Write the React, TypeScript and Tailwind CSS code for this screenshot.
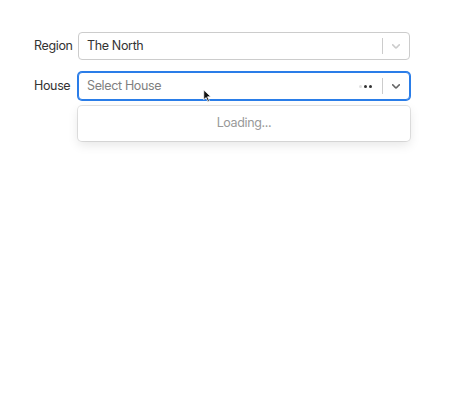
import React from 'react';

function Chevron({ dark }: { dark?: boolean }) {
  return (
    <svg viewBox="0 0 20 20" className={`w-[14px] h-[14px] ${dark ? 'fill-[#666666]' : 'fill-[#cccccc]'}`}>
      <path d="M4.516 7.548c0.436-0.446 1.043-0.481 1.576 0l3.908 3.747 3.908-3.747c0.533-0.481 1.141-0.446 1.574 0 0.436 0.445 0.408 1.197 0 1.615-0.406 0.418-4.695 4.502-4.695 4.502-0.217 0.223-0.502 0.335-0.787 0.335s-0.57-0.112-0.789-0.335c0 0-4.287-4.084-4.695-4.502s-0.436-1.17 0-1.615z" />
    </svg>
  );
}

export default function App() {
  return (
    <div className="w-[474px] h-[406px] bg-white pt-[32px] pl-[34px] text-[12.5px] tracking-[-0.35px] text-[#333333]" style={{ fontFamily: 'Inter, "Noto Sans", sans-serif' }}>
      <div className="flex flex-col gap-[12px] w-[376px]">
        {/* Region */}
        <div className="flex items-center">
          <span className="w-[44px] shrink-0 pt-[1px]">Region</span>
          <div className="flex-1 h-[28px] flex items-center border border-[#cccccc] rounded-[4px] bg-white">
            <div className="flex-1 pl-[8px] pt-[1px]">The North</div>
            <span className="w-px h-[16px] bg-[#cccccc]" />
            <div className="px-[6px] flex items-center">
              <Chevron />
            </div>
          </div>
        </div>

        {/* House */}
        <div className="flex items-center">
          <span className="w-[44px] shrink-0 pt-[1px]">House</span>
          <div className="relative flex-1">
            <div className="h-[28px] flex items-center border border-[#2a7de8] shadow-[0_0_0_1px_#2a7de8] rounded-[4px] bg-white">
              <div className="flex-1 pl-[8px] pt-[1px] text-[#808080]">Select House</div>
              <div className="flex items-center gap-[2px] pr-[10px]">
                <span className="w-[3px] h-[3px] rounded-full bg-[#666666] opacity-20" />
                <span className="w-[3px] h-[3px] rounded-full bg-[#333333]" />
                <span className="w-[3px] h-[3px] rounded-full bg-[#333333]" />
              </div>
              <span className="w-px h-[16px] bg-[#cccccc]" />
              <div className="px-[6px] flex items-center">
                <Chevron dark />
              </div>
            </div>
            <div className="absolute left-0 right-0 top-[34px] bg-white rounded-[4px] shadow-[0_0_0_1px_rgba(0,0,0,0.1),0_4px_11px_rgba(0,0,0,0.1)] py-[8px] text-center text-[#999999]">
              Loading...
            </div>
            <svg viewBox="0 0 12 18" className="absolute left-[125px] top-[17px] w-[9px] h-[14px]">
              <path d="M1 1 L1 14 L4 11 L6.5 16.5 L8.5 15.5 L6 10 L10.5 10 Z" fill="#111" stroke="#fff" strokeWidth="1" />
            </svg>
          </div>
        </div>
      </div>
    </div>
  );
}
